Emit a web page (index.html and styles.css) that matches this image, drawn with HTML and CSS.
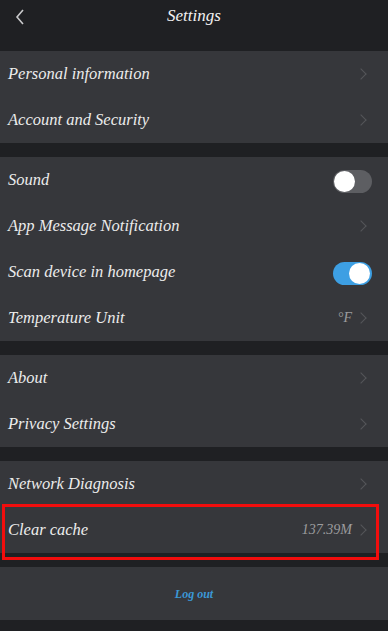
FILE: index.html
```html
<!DOCTYPE html>
<html lang="en">
<head>
  <meta charset="UTF-8">
  <meta name="viewport" content="width=device-width, initial-scale=1.0">
  <title>Settings</title>
  <link rel="stylesheet" href="styles.css">
</head>
<body>
  <div class="header">
    <svg class="back" width="12" height="18" viewBox="0 0 12 18">
      <path d="M9 2 L3 9 L9 16" fill="none" stroke="#c9c9cb" stroke-width="1.6"/>
    </svg>
    <div class="title">Settings</div>
  </div>

  <div class="group">
    <div class="row"><span>Personal information</span><span class="arrow"></span></div>
    <div class="row"><span>Account and Security</span><span class="arrow"></span></div>
  </div>

  <div class="group">
    <div class="row"><span>Sound</span><span class="switch"></span></div>
    <div class="row"><span>App Message Notification</span><span class="arrow"></span></div>
    <div class="row"><span>Scan device in homepage</span><span class="switch on"></span></div>
    <div class="row"><span>Temperature Unit</span><span class="right"><span class="value">°F</span><span class="arrow"></span></span></div>
  </div>

  <div class="group">
    <div class="row"><span>About</span><span class="arrow"></span></div>
    <div class="row"><span>Privacy Settings</span><span class="arrow"></span></div>
  </div>

  <div class="group">
    <div class="row"><span>Network Diagnosis</span><span class="arrow"></span></div>
    <div class="row marked"><span>Clear cache</span><span class="right"><span class="value">137.39M</span><span class="arrow"></span></span></div>
  </div>

  <div class="group logout">
    <button>Log out</button>
  </div>
</body>
</html>
```
FILE: styles.css
```css
* {
  margin: 0;
  padding: 0;
  box-sizing: border-box;
}

body {
  font-family: "Liberation Serif", serif;
  font-style: italic;
  background-color: #1f2023;
  color: #ececec;
  width: 388px;
  height: 631px;
  overflow: hidden;
}

.header {
  height: 51px;
  display: flex;
  align-items: flex-start;
  justify-content: center;
  position: relative;
  padding-top: 6px;
}

.back {
  position: absolute;
  left: 14px;
  top: 8px;
}

.title {
  font-size: 17px;
  color: #f2f2f2;
}

.group {
  background-color: #36373b;
  margin-bottom: 14px;
}

.row {
  height: 46px;
  display: flex;
  align-items: center;
  justify-content: space-between;
  padding: 0 17px 0 8px;
  font-size: 16.5px;
  position: relative;
}

.right {
  display: flex;
  align-items: center;
  gap: 5px;
}

.value {
  color: #9c9c9e;
  font-size: 14px;
}

.arrow {
  width: 8px;
  height: 8px;
  border-top: 1.4px solid #55565a;
  border-right: 1.4px solid #55565a;
  transform: rotate(45deg);
  margin-right: 6px;
}

/* toggle switches */
.switch {
  width: 39px;
  height: 23px;
  border-radius: 12px;
  background-color: #5d5e62;
  position: relative;
  margin-right: -1px;
  margin-top: 2px;
}

.switch::after {
  content: "";
  position: absolute;
  left: 1px;
  top: 1px;
  width: 21px;
  height: 21px;
  border-radius: 50%;
  background-color: #fff;
}

.switch.on {
  background-color: #3d9fe3;
}

.switch.on::after {
  left: auto;
  right: 2px;
}

/* red highlight frame over the cache row */
.marked::after {
  content: "";
  position: absolute;
  left: 2px;
  right: 9px;
  top: -3px;
  bottom: -7px;
  border: 3px solid #f20d0d;
}

.logout {
  height: 53px;
  display: flex;
  align-items: center;
  justify-content: center;
}

.logout button {
  border: none;
  background: none;
  color: #3b98d6;
  font-family: inherit;
  font-style: italic;
  font-weight: bold;
  font-size: 12px;
  margin-top: 1px;
}
```
